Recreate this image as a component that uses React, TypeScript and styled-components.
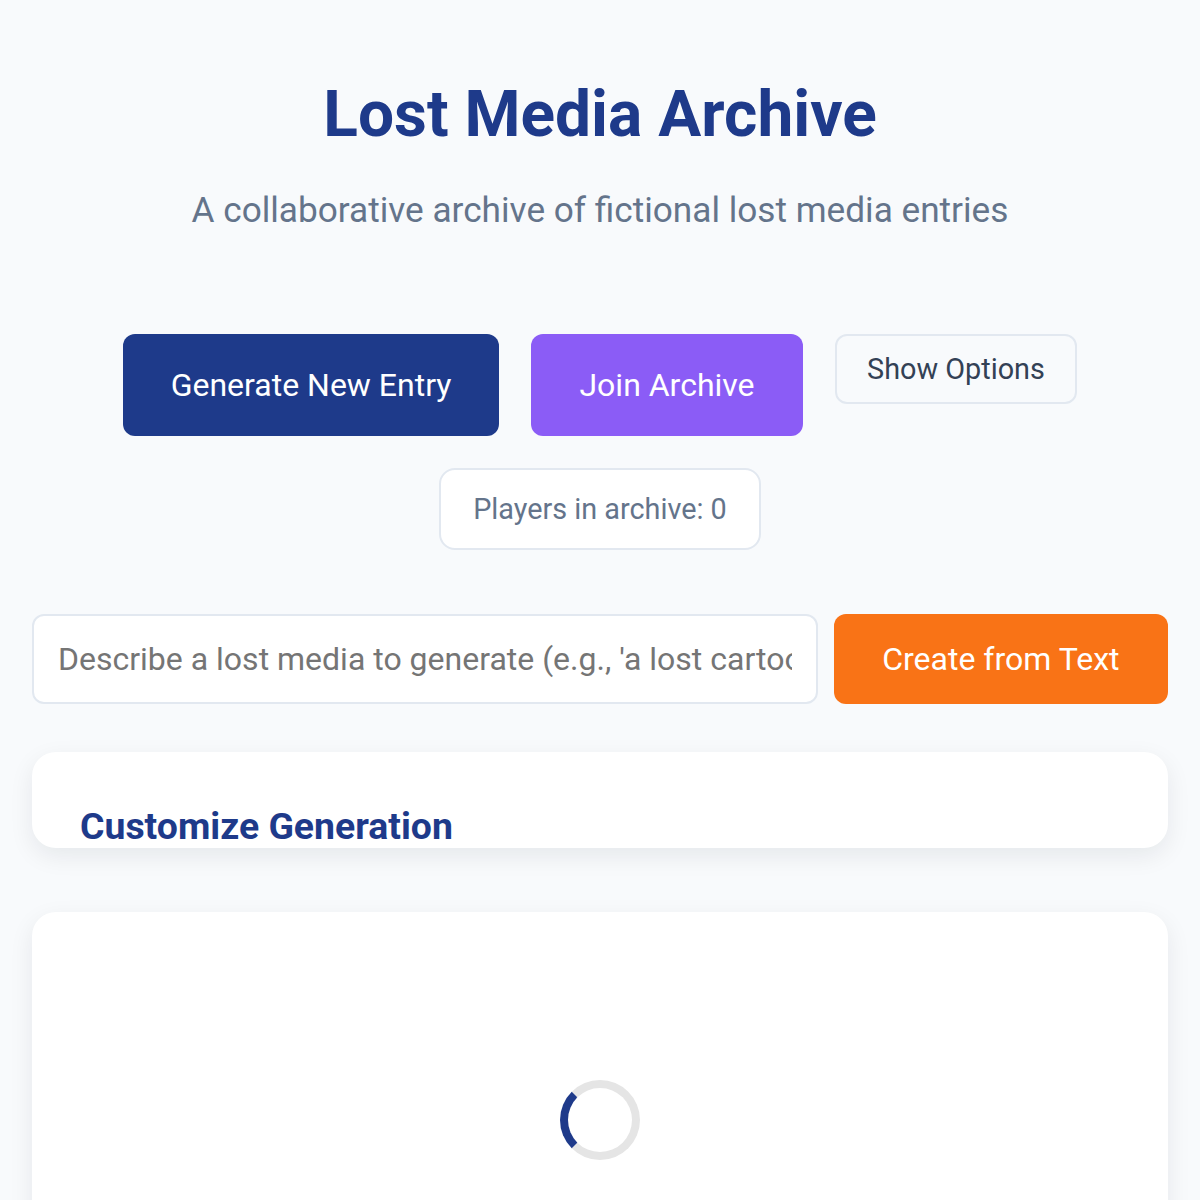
import React from "react";
import styled, { createGlobalStyle } from "styled-components";

const GlobalStyle = createGlobalStyle`
  html, body {
    margin: 0;
    padding: 0;
    background: #f8fafc;
    font-family: Roboto, "Noto Sans", "Liberation Sans", sans-serif;
  }
  * { box-sizing: border-box; }
`;

const Page = styled.div`
  max-width: 1200px;
  margin: 0 auto;
  padding: 77px 32px 0;
  background: #f8fafc;
  min-height: 1200px;
`;

const Header = styled.header`
  text-align: center;
  margin-bottom: 99px;
`;

const Title = styled.h1`
  margin: 0 0 32px;
  font-size: 64px;
  line-height: 1.2;
  font-weight: 700;
  color: #1e3a8a;
`;

const Subtitle = styled.p`
  margin: 0;
  font-size: 35.2px;
  line-height: 1.4;
  color: #64748b;
`;

const ActionRow = styled.div`
  display: flex;
  flex-wrap: wrap;
  justify-content: center;
  align-items: flex-start;
  gap: 32px;
  margin-bottom: 64px;
`;

const ActionButton = styled.button<{ $bg: string }>`
  border: none;
  background: ${(p) => p.$bg};
  color: #ffffff;
  font-family: inherit;
  font-size: 32px;
  line-height: 38px;
  padding: 32px 48px;
  border-radius: 12px;
  cursor: pointer;
`;

const GhostButton = styled.button`
  border: 2px solid #e2e8f0;
  background: #f8fafc;
  color: #334155;
  font-family: inherit;
  font-size: 28.8px;
  line-height: 34px;
  padding: 16px 30.5px;
  border-radius: 12px;
  cursor: pointer;
`;

const Badge = styled.div`
  border: 2px solid #e2e8f0;
  background: #ffffff;
  color: #64748b;
  font-size: 28.8px;
  line-height: 34px;
  padding: 22px 32px;
  border-radius: 16px;
`;

const PromptRow = styled.div`
  display: flex;
  gap: 16px;
  margin-bottom: 48px;
`;

const PromptInput = styled.input`
  flex: 1;
  min-width: 0;
  height: 90px;
  border: 2px solid #e2e8f0;
  border-radius: 12px;
  background: #ffffff;
  padding: 0 24px;
  font-family: inherit;
  font-size: 32px;
  color: #1e293b;
  outline: none;
  &::placeholder { color: #757575; }
`;

const CreateButton = styled.button`
  flex-shrink: 0;
  height: 90px;
  padding: 0 48.5px;
  border: none;
  border-radius: 12px;
  background: #f97316;
  color: #ffffff;
  font-family: inherit;
  font-size: 32px;
  cursor: pointer;
`;

const Card = styled.section<{ $collapsed?: boolean }>`
  background: #ffffff;
  border-radius: 24px;
  box-shadow: 0 8px 24px rgba(15, 23, 42, 0.08);
  padding: 48px;
  overflow: hidden;
  ${(p) => (p.$collapsed ? "height: 96px; margin-bottom: 64px;" : "")}
`;

const CardTitle = styled.h2`
  margin: 0;
  font-size: 37.4px;
  line-height: 1.4;
  font-weight: 700;
  color: #1e3a8a;
`;

const LoaderWrap = styled.div`
  display: flex;
  justify-content: center;
  padding: 120px 0 200px;
`;

const Spinner = styled.div`
  width: 80px;
  height: 80px;
  border-radius: 50%;
  border: 8px solid #e5e5e5;
  border-left-color: #1e3a8a;
`;

export default function App() {
  return (
    <>
      <GlobalStyle />
      <Page>
        <Header>
          <Title>Lost Media Archive</Title>
          <Subtitle>A collaborative archive of fictional lost media entries</Subtitle>
        </Header>
        <ActionRow>
          <ActionButton $bg="#1e3a8a">Generate New Entry</ActionButton>
          <ActionButton $bg="#8b5cf6">Join Archive</ActionButton>
          <GhostButton>Show Options</GhostButton>
          <Badge>Players in archive: 0</Badge>
        </ActionRow>
        <PromptRow>
          <PromptInput placeholder="Describe a lost media to generate (e.g., 'a lost cartoon from the 90s')" />
          <CreateButton>Create from Text</CreateButton>
        </PromptRow>
        <Card $collapsed>
          <CardTitle>Customize Generation</CardTitle>
        </Card>
        <Card>
          <LoaderWrap>
            <Spinner />
          </LoaderWrap>
        </Card>
      </Page>
    </>
  );
}
